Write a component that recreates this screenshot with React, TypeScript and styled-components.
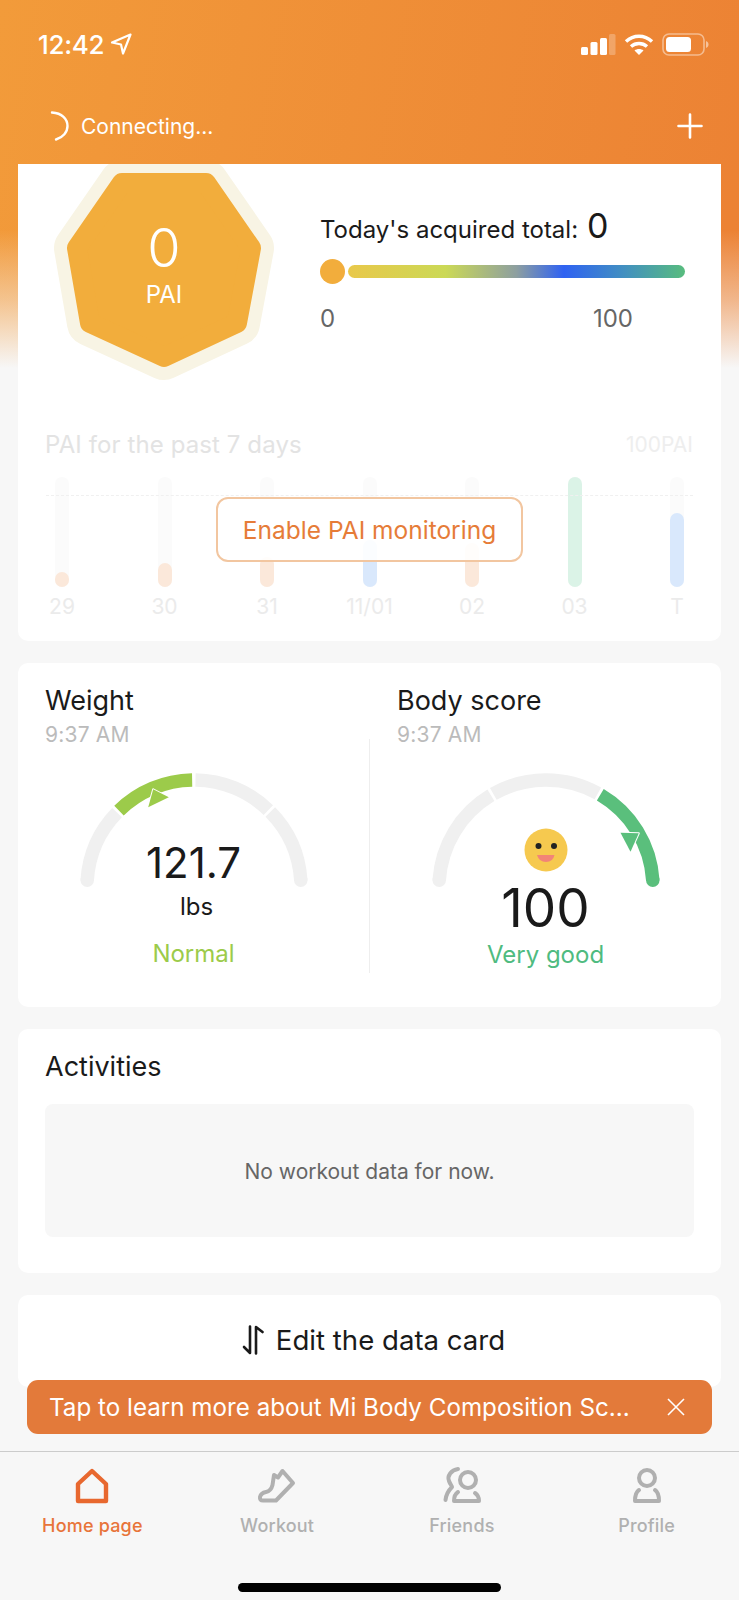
import React from "react";
import styled, { createGlobalStyle } from "styled-components";

const GlobalStyle = createGlobalStyle`
  html, body {
    margin: 0;
    padding: 0;
    background: #f7f7f7;
  }
  * {
    box-sizing: border-box;
  }
`;

const Page = styled.div`
  width: 739px;
  height: 1600px;
  overflow: hidden;
  display: flex;
  flex-direction: column;
  font-family: Inter, "Noto Sans", sans-serif;
  color: #1a1a1a;
  background:
    linear-gradient(to bottom, rgba(247, 247, 247, 0) 230px, rgba(247, 247, 247, 0.45) 300px, #f7f7f7 368px),
    linear-gradient(100deg, #f29b3a 0%, #ea7a32 100%);
`;

const StatusBar = styled.div`
  height: 88px;
  padding: 0 30px 0 38px;
  display: flex;
  justify-content: space-between;
  align-items: center;
  color: #fff;
`;

const Clock = styled.div`
  display: flex;
  align-items: center;
  gap: 6px;
  font-size: 26px;
  font-weight: 500;
  letter-spacing: -0.3px;
`;

const StatusIcons = styled.div`
  display: flex;
  align-items: center;
  gap: 8px;
`;

const TopBar = styled.div`
  height: 76px;
  padding: 0 36px 0 50px;
  display: flex;
  align-items: center;
  justify-content: space-between;
  color: #fff;
`;

const Connecting = styled.div`
  display: flex;
  align-items: center;
  gap: 12px;
  font-size: 21px;
`;

const Scroll = styled.div`
  position: relative;
  flex: 1;
  overflow: hidden;
  padding: 0 18px;
  display: flex;
  flex-direction: column;
  gap: 22px;
`;

const Card = styled.section`
  flex: none;
  background: #fff;
  border-radius: 10px;
`;

const PaiCard = styled(Card)`
  height: 477px;
  overflow: hidden;
  border-radius: 0 0 10px 10px;
`;

const PaiTop = styled.div`
  display: flex;
  padding-left: 26px;
  margin-top: -10px;
`;

const Hex = styled.div`
  display: grid;
  width: 240px;
  height: 230px;
  & > * {
    grid-area: 1 / 1;
  }
`;

const HexText = styled.div`
  padding-top: 64px;
  display: flex;
  flex-direction: column;
  align-items: center;
  color: #fff;
`;

const HexValue = styled.div`
  font-size: 54px;
  line-height: 60px;
  font-weight: 300;
`;

const HexLabel = styled.div`
  font-size: 24px;
  line-height: 30px;
  margin-top: 2px;
`;

const Today = styled.div`
  width: 365px;
  margin-left: 36px;
  padding-top: 52px;
`;

const TodayTitle = styled.div`
  display: flex;
  align-items: baseline;
  gap: 9px;
  font-size: 24px;
  line-height: 40px;
  height: 40px;
`;

const TodayValue = styled.span`
  font-size: 34px;
`;

const Slider = styled.div`
  display: flex;
  align-items: center;
  gap: 3px;
  margin-top: 13px;
`;

const Knob = styled.div`
  width: 25px;
  height: 25px;
  border-radius: 50%;
  background: #f2ad3c;
`;

const Track = styled.div`
  flex: 1;
  height: 13px;
  border-radius: 7px;
  background: linear-gradient(to right, #e9c84a 0%, #cbd956 29%, #8d9fa0 50%, #2f62f2 64%, #4290c0 82%, #58bc7e 100%);
`;

const Scale = styled.div`
  display: flex;
  justify-content: space-between;
  margin-top: 20px;
  padding-right: 52px;
  font-size: 24px;
  line-height: 30px;
  color: #666;
`;

const ChartHead = styled.div`
  display: flex;
  justify-content: space-between;
  align-items: center;
  padding: 0 28px 0 27px;
  margin-top: 46px;
`;

const ChartTitle = styled.div`
  font-size: 24px;
  line-height: 30px;
  letter-spacing: 0.1px;
  color: #e3e3e3;
`;

const ChartMax = styled.div`
  font-size: 21px;
  line-height: 30px;
  color: #eeeeee;
`;

const Chart = styled.div`
  position: relative;
  display: flex;
  justify-content: space-between;
  margin: 17px 28px 0;
`;

const ChartLimit = styled.div`
  position: absolute;
  left: 0;
  right: 0;
  top: 18px;
  border-top: 1px dashed #f0f0f0;
`;

const BarColumn = styled.div`
  width: 32px;
  display: flex;
  flex-direction: column;
  align-items: center;
`;

const BarTrack = styled.div`
  width: 14px;
  height: 110px;
  border-radius: 7px;
  background: #fbfbfb;
  display: flex;
  align-items: flex-end;
`;

const BarFill = styled.div<{ $height: number; $color: string }>`
  width: 100%;
  height: ${(p) => p.$height}px;
  border-radius: 7px;
  background: ${(p) => p.$color};
`;

const BarLabel = styled.div`
  margin-top: 7px;
  font-size: 21px;
  line-height: 26px;
  color: #ebebeb;
  white-space: nowrap;
`;

const EnableButton = styled.div`
  position: absolute;
  top: 20px;
  left: 50%;
  width: 307px;
  height: 65px;
  margin-left: -153.5px;
  border: 2px solid #f2c6a0;
  border-radius: 12px;
  background: rgba(255, 255, 255, 0.88);
  display: flex;
  align-items: center;
  justify-content: center;
  font-size: 24.5px;
  color: #e67c38;
`;

const MetricsCard = styled(Card)`
  height: 344px;
  display: grid;
  grid-template-columns: 1fr 1px 1fr;
`;

const Metric = styled.div`
  padding-top: 20px;
  display: flex;
  flex-direction: column;
`;

const MetricHead = styled.div`
  padding-left: 27px;
`;

const CardTitle = styled.div`
  font-size: 27px;
  line-height: 36px;
`;

const MetricTime = styled.div`
  margin-top: 3px;
  font-size: 21px;
  line-height: 26px;
  letter-spacing: 0.2px;
  color: #bbbbbb;
`;

const MetricDivider = styled.div`
  margin-top: 76px;
  height: 234px;
  background: #eeeeee;
`;

const GaugeBox = styled.div`
  margin-top: 12px;
  display: grid;
  justify-items: center;
  & > * {
    grid-area: 1 / 1;
  }
`;

const Readout = styled.div<{ $top: number }>`
  padding-top: ${(p) => p.$top}px;
  display: flex;
  flex-direction: column;
  align-items: center;
`;

const ReadoutValue = styled.div<{ $size: number; $line: number }>`
  font-size: ${(p) => p.$size}px;
  line-height: ${(p) => p.$line}px;
  font-weight: 400;
`;

const ReadoutUnit = styled.div`
  margin-top: 4px;
  padding-left: 6px;
  font-size: 24px;
  line-height: 30px;
`;

const ReadoutStatus = styled.div<{ $color: string; $gap: number }>`
  margin-top: ${(p) => p.$gap}px;
  font-size: 24px;
  line-height: 30px;
  color: ${(p) => p.$color};
`;

const ActivitiesCard = styled(Card)`
  height: 244px;
  padding: 20px 27px 0;
`;

const EmptyBox = styled.div`
  margin-top: 19px;
  height: 133px;
  padding-top: 2px;
  border-radius: 8px;
  background: #f7f7f7;
  display: flex;
  align-items: center;
  justify-content: center;
  font-size: 21px;
  color: #666;
`;

const EditCard = styled(Card)`
  height: 92px;
  padding: 0 0 2px 8px;
  display: flex;
  align-items: center;
  justify-content: center;
  gap: 12px;
  font-size: 27.6px;
`;

const Banner = styled.div`
  position: absolute;
  left: 27px;
  right: 27px;
  bottom: 17px;
  height: 54px;
  padding: 0 27px 0 22px;
  border-radius: 11px;
  background: #e37a3a;
  color: #fff;
  display: flex;
  align-items: center;
  justify-content: space-between;
  font-size: 24.2px;
`;

const TabBar = styled.nav`
  flex: none;
  height: 149px;
  border-top: 1px solid #cccccc;
  background: #f7f7f7;
  display: flex;
  flex-direction: column;
`;

const Tabs = styled.div`
  display: grid;
  grid-template-columns: repeat(4, 1fr);
  padding-top: 13px;
`;

const Tab = styled.div<{ $active?: boolean }>`
  display: flex;
  flex-direction: column;
  align-items: center;
  gap: 9px;
  font-size: 18px;
  line-height: 24px;
  font-weight: 500;
  letter-spacing: 0.2px;
  color: ${(p) => (p.$active ? "#e8743a" : "#b0b0b0")};
`;

const HomeIndicator = styled.div`
  width: 263px;
  height: 9px;
  margin: 45px auto 0;
  border-radius: 5px;
  background: #000;
`;

const polar = (cx: number, cy: number, r: number, deg: number) => {
  const rad = (deg * Math.PI) / 180;
  return { x: cx + r * Math.cos(rad), y: cy - r * Math.sin(rad) };
};

const CX = 120;
const CY = 127;
const R = 107;
const STROKE = 13.5;
const GREY = "#f0f0f0";

type Segment = { from: number; to: number; color: string };

function Gauge({
  segments,
  pointer,
  pointerColor,
  children,
}: {
  segments: Segment[];
  pointer: string;
  pointerColor: string;
  children?: React.ReactNode;
}) {
  const first = segments[0];
  const last = segments[segments.length - 1];
  const start = polar(CX, CY, R, first.from);
  const end = polar(CX, CY, R, last.to);
  return (
    <svg width="240" height="140" viewBox="0 0 240 140">
      {segments.map((s) => {
        const a = polar(CX, CY, R, s.from);
        const b = polar(CX, CY, R, s.to);
        return (
          <path
            key={s.from}
            d={`M${a.x} ${a.y} A${R} ${R} 0 0 1 ${b.x} ${b.y}`}
            fill="none"
            stroke={s.color}
            strokeWidth={STROKE}
          />
        );
      })}
      <circle cx={start.x} cy={start.y} r={STROKE / 2} fill={first.color} />
      <circle cx={end.x} cy={end.y} r={STROKE / 2} fill={last.color} />
      <polygon
        points={pointer}
        fill={pointerColor}
        stroke="#fff"
        strokeWidth="2"
        strokeLinejoin="round"
        paintOrder="stroke"
      />
      {children}
    </svg>
  );
}

function Smiley() {
  return (
    <g>
      <circle cx="120" cy="90" r="21.5" fill="#f6c94f" />
      <circle cx="112.5" cy="86" r="3" fill="#222" />
      <circle cx="128" cy="86" r="3" fill="#222" />
      <path d="M111 95 H128.5 Q127 102 120 102 Q113 102 111 95 Z" fill="#f28477" />
    </g>
  );
}

const bars = [
  { label: "29", height: 15, color: "#fbe8da" },
  { label: "30", height: 24, color: "#fbe8da" },
  { label: "31", height: 30, color: "#fbe8da" },
  { label: "11/01", height: 47, color: "#d9e8fc" },
  { label: "02", height: 44, color: "#fbe8da" },
  { label: "03", height: 110, color: "#dbf3e7" },
  { label: "T", height: 74, color: "#d9e8fc" },
];

const weightSegments: Segment[] = [
  { from: 176.4, to: 136, color: GREY },
  { from: 134.5, to: 91, color: "#9ccb4a" },
  { from: 89.2, to: 46, color: GREY },
  { from: 44.5, to: 3.6, color: GREY },
];

const scoreSegments: Segment[] = [
  { from: 176.4, to: 121, color: GREY },
  { from: 119.5, to: 61, color: GREY },
  { from: 59.5, to: 3.6, color: "#5abf7c" },
];

function App() {
  return (
    <Page>
      <GlobalStyle />
      <StatusBar>
        <Clock>
          12:42
          <svg width="22" height="22" viewBox="0 0 22 22" fill="none" stroke="#fff" strokeWidth="2.2" strokeLinejoin="round">
            <path d="M20.5 1.5 L2 9.5 L11 11.5 L13 20.5 Z" />
          </svg>
        </Clock>
        <StatusIcons>
          <svg width="35" height="21" viewBox="0 0 35 21" fill="#fff">
            <rect x="0" y="13" width="7" height="8" rx="1.5" />
            <rect x="9.5" y="8" width="7" height="13" rx="1.5" />
            <rect x="19" y="4" width="7" height="17" rx="1.5" />
            <rect x="28" y="0" width="6.5" height="21" rx="1.5" opacity="0.25" />
          </svg>
          <svg width="30" height="21" viewBox="0 0 30 21" fill="none" stroke="#fff" strokeWidth="3.4">
            <path d="M2 7.5 C9.5 0.5 20.5 0.5 28 7.5" />
            <path d="M7 12.5 C11.5 8.5 18.5 8.5 23 12.5" />
            <path d="M15 21 L10.5 16.5 C13 14.5 17 14.5 19.5 16.5 Z" fill="#fff" stroke="none" />
          </svg>
          <svg width="47" height="23" viewBox="0 0 47 23" fill="none">
            <rect x="1" y="1" width="41" height="21" rx="6" stroke="#fff" strokeOpacity="0.45" strokeWidth="1.6" />
            <rect x="4" y="4" width="25" height="15" rx="3.5" fill="#fff" />
            <path d="M44 8 C46 9 46.5 10 46.5 11.5 C46.5 13 46 14 44 15 Z" fill="#fff" fillOpacity="0.5" />
          </svg>
        </StatusIcons>
      </StatusBar>
      <TopBar>
        <Connecting>
          <svg width="19" height="30" viewBox="0 0 19 30" fill="none" stroke="#fff" strokeWidth="2.4" strokeLinecap="round">
            <path d="M2 1.5 C12 2 17.5 8 17.5 15 C17.5 21 13 26.5 6 28.5" />
          </svg>
          Connecting...
        </Connecting>
        <svg width="26" height="26" viewBox="0 0 26 26" stroke="#fff" strokeWidth="2.6" strokeLinecap="round">
          <path d="M13 1.5 V24.5 M1.5 13 H24.5" />
        </svg>
      </TopBar>
      <Scroll>
        <PaiCard>
          <PaiTop>
            <Hex>
              <svg width="240" height="230" viewBox="44 154 240 230" strokeLinejoin="round">
                <polygon
                  points="122,183 206,183 251,248 237,323 164,357 90,323 77,248"
                  fill="#f8f4e4"
                  stroke="#f8f4e4"
                  strokeWidth="46"
                />
                <polygon
                  points="122,183 206,183 251,248 237,323 164,357 90,323 77,248"
                  fill="#f2ad3c"
                  stroke="#f2ad3c"
                  strokeWidth="20"
                />
              </svg>
              <HexText>
                <HexValue>0</HexValue>
                <HexLabel>PAI</HexLabel>
              </HexText>
            </Hex>
            <Today>
              <TodayTitle>
                Today's acquired total: <TodayValue>0</TodayValue>
              </TodayTitle>
              <Slider>
                <Knob />
                <Track />
              </Slider>
              <Scale>
                <span>0</span>
                <span>100</span>
              </Scale>
            </Today>
          </PaiTop>
          <ChartHead>
            <ChartTitle>PAI for the past 7 days</ChartTitle>
            <ChartMax>100PAI</ChartMax>
          </ChartHead>
          <Chart>
            {bars.map((b) => (
              <BarColumn key={b.label}>
                <BarTrack>
                  <BarFill $height={b.height} $color={b.color} />
                </BarTrack>
                <BarLabel>{b.label}</BarLabel>
              </BarColumn>
            ))}
            <ChartLimit />
            <EnableButton>Enable PAI monitoring</EnableButton>
          </Chart>
        </PaiCard>

        <MetricsCard>
          <Metric>
            <MetricHead>
              <CardTitle>Weight</CardTitle>
              <MetricTime>9:37 AM</MetricTime>
            </MetricHead>
            <GaugeBox>
              <Gauge
                segments={weightSegments}
                pointer="79.2,29.3 94.8,37.3 74.2,47.3"
                pointerColor="#9ccb4a"
              />
              <Readout $top={78}>
                <ReadoutValue $size={42} $line={50}>121.7</ReadoutValue>
                <ReadoutUnit>lbs</ReadoutUnit>
                <ReadoutStatus $color="#9ccb4a" $gap={17}>Normal</ReadoutStatus>
              </Readout>
            </GaugeBox>
          </Metric>
          <MetricDivider />
          <Metric>
            <MetricHead>
              <CardTitle>Body score</CardTitle>
              <MetricTime>9:37 AM</MetricTime>
            </MetricHead>
            <GaugeBox>
              <Gauge
                segments={scoreSegments}
                pointer="194.5,72.7 212.8,73.3 204.5,91.7"
                pointerColor="#5abf7c"
              >
                <Smiley />
              </Gauge>
              <Readout $top={118}>
                <ReadoutValue $size={53} $line={60}>100</ReadoutValue>
                <ReadoutStatus $color="#4fbb80" $gap={2}>Very good</ReadoutStatus>
              </Readout>
            </GaugeBox>
          </Metric>
        </MetricsCard>

        <ActivitiesCard>
          <CardTitle>Activities</CardTitle>
          <EmptyBox>No workout data for now.</EmptyBox>
        </ActivitiesCard>

        <EditCard>
          <svg width="22" height="30" viewBox="0 0 22 30" fill="none" stroke="#1a1a1a" strokeWidth="2.6" strokeLinecap="round" strokeLinejoin="round">
            <path d="M8 1.5 V28 L2 22" />
            <path d="M14 28.5 V2 L20.5 7" />
          </svg>
          Edit the data card
        </EditCard>

        <Banner>
          <span>Tap to learn more about Mi Body Composition Sc...</span>
          <svg width="18" height="18" viewBox="0 0 18 18" stroke="#fff" strokeWidth="1.6">
            <path d="M1 1 L17 17 M17 1 L1 17" />
          </svg>
        </Banner>
      </Scroll>
      <TabBar>
        <Tabs>
          <Tab $active>
            <svg width="40" height="40" viewBox="0 0 40 40" fill="none" stroke="#e8682f" strokeWidth="4.4" strokeLinejoin="round">
              <path d="M20 6 L34 19 V36 H6 V19 Z" />
            </svg>
            Home page
          </Tab>
          <Tab>
            <svg width="40" height="40" viewBox="0 0 40 40" fill="none" stroke="#b0b0b0" strokeWidth="4" strokeLinejoin="round">
              <path d="M17 10 L21 12.5 L25.5 6 L36 18 L19 35.5 H6 Q2.5 35.5 3 32 Q4 28 9 27 Q14 26 15.5 20 Z" />
            </svg>
            Workout
          </Tab>
          <Tab>
            <svg width="40" height="40" viewBox="0 0 40 40" fill="none" stroke="#b0b0b0" strokeWidth="4" strokeLinecap="round" strokeLinejoin="round">
              <circle cx="26" cy="15" r="8" />
              <path d="M16 27 C13 29 12 33 12 36 H37 C37 33 36 30 33 28" />
              <path d="M16 4 C9 5 5 11 7 16 C8 19 10 21 10 22 C7 25 4 30 3.5 35" />
            </svg>
            Friends
          </Tab>
          <Tab>
            <svg width="40" height="40" viewBox="0 0 40 40" fill="none" stroke="#b0b0b0" strokeWidth="4" strokeLinecap="round" strokeLinejoin="round">
              <circle cx="20" cy="13" r="8" />
              <path d="M12 25 C9 27 8 31 8 36 H32 C32 31 31 27 28 25" />
            </svg>
            Profile
          </Tab>
        </Tabs>
        <HomeIndicator />
      </TabBar>
    </Page>
  );
}

export default App;
